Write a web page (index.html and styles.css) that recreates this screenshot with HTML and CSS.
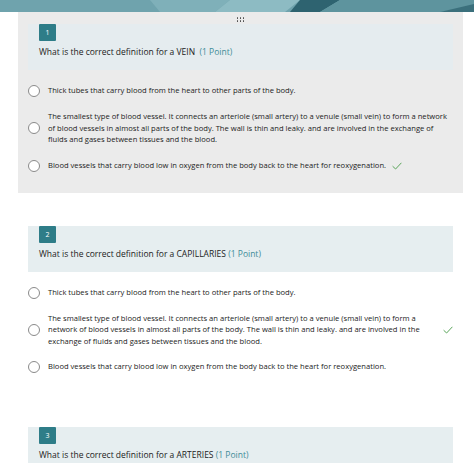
FILE: index.html
```html
<!DOCTYPE html>
<html>
<head>
<meta charset="utf-8">
<link rel="stylesheet" href="styles.css">
</head>
<body>
<div class="banner">
  <svg width="474" height="12" viewBox="0 0 474 12" preserveAspectRatio="none">
    <rect x="0" y="0" width="474" height="12" fill="#6fa3ad"/>
    <polygon points="150,0 230,0 215,12 160,12" fill="#7fb0b9"/>
    <polygon points="230,0 300,0 285,12 215,12" fill="#8dbbc3"/>
    <polygon points="300,0 340,0 320,12 290,12" fill="#2e6370"/>
    <polygon points="340,0 474,0 474,6 440,12 320,12" fill="#5e949e"/>
    <polygon points="474,4 474,12 440,12" fill="#3b707c"/>
  </svg>
</div>
<main class="page">
  <section class="card active">
    <div class="grip"><span class="dots"><i></i><i></i><i></i><i></i><i></i><i></i></span></div>
    <div class="qhead">
      <span class="badge">1</span>
      <div class="qtext">What is the correct definition for a VEIN <span class="pts">&nbsp;(1 Point)</span></div>
    </div>
    <ul class="opts">
      <li class="opt"><span class="radio"></span><span class="otext">Thick tubes that carry blood from the heart to other parts of the body.</span></li>
      <li class="opt"><span class="radio"></span><span class="otext">The smallest type of blood vessel. It connects an arteriole (small artery) to a venule (small vein) to form a network of blood vessels in almost all parts of the body. The wall is thin and leaky. and are involved in the exchange of fluids and gases between tissues and the blood.</span></li>
      <li class="opt"><span class="radio"></span><span class="otext">Blood vessels that carry blood low in oxygen from the body back to the heart for reoxygenation.</span><svg class="check" width="10" height="8" viewBox="0 0 10 8"><path d="M0.6 4.2 L3.6 7 L9.4 0.8" fill="none" stroke="#5aa55a" stroke-width="1"/></svg></li>
    </ul>
  </section>
  <section class="card">
    <div class="grip"></div>
    <div class="qhead">
      <span class="badge">2</span>
      <div class="qtext">What is the correct definition for a CAPILLARIES <span class="pts">(1 Point)</span></div>
    </div>
    <ul class="opts">
      <li class="opt"><span class="radio"></span><span class="otext">Thick tubes that carry blood from the heart to other parts of the body.</span></li>
      <li class="opt"><span class="radio"></span><span class="otext">The smallest type of blood vessel. It connects an arteriole (small artery) to a venule (small vein) to form a network of blood vessels in almost all parts of the body. The wall is thin and leaky. and are involved in the exchange of fluids and gases between tissues and the blood.</span><svg class="check" width="10" height="8" viewBox="0 0 10 8"><path d="M0.6 4.2 L3.6 7 L9.4 0.8" fill="none" stroke="#5aa55a" stroke-width="1"/></svg></li>
      <li class="opt"><span class="radio"></span><span class="otext">Blood vessels that carry blood low in oxygen from the body back to the heart for reoxygenation.</span></li>
    </ul>
  </section>
  <section class="card">
    <div class="grip"></div>
    <div class="qhead">
      <span class="badge">3</span>
      <div class="qtext">What is the correct definition for a ARTERIES <span class="pts">(1 Point)</span></div>
    </div>
  </section>
</main>
</body>
</html>
```
FILE: styles.css
```css
html, body {
  margin: 0;
  padding: 0;
  background: #ffffff;
  overflow: hidden;
}
body {
  font-family: "Open Sans", "Noto Sans", "Liberation Sans", sans-serif;
  color: #262626;
  width: 474px;
  height: 463px;
}
.banner {
  height: 12px;
  line-height: 0;
}
.banner svg {
  display: block;
}
.page {
  padding: 0 11px 0 18px;
}
.card {
  padding: 0 10px;
  margin-bottom: 21px;
  background: #ffffff;
}
.card.active {
  background: #ebebeb;
}
.grip {
  height: 12px;
  display: flex;
  justify-content: center;
  align-items: center;
}
.dots {
  display: grid;
  grid-template-columns: repeat(3, 2px);
  grid-auto-rows: 2px;
  gap: 1px 1px;
  margin-top: 3px;
}
.dots i {
  display: block;
  width: 1.6px;
  height: 1.6px;
  border-radius: 50%;
  background: #4a4a4a;
}
.qhead {
  background: #e6eef0;
  padding: 0 11px 10px;
  height: 36px;
}
.card.active .qhead {
  background: #e5ecef;
}
.badge {
  display: flex;
  width: 17px;
  height: 17px;
  background: #2e7d88;
  color: #ffffff;
  font-size: 7px;
  align-items: center;
  justify-content: center;
  border-radius: 1px;
}
.qtext {
  margin-top: 3px;
  line-height: 16px;
  font-size: 8.5px;
  color: #222222;
  white-space: nowrap;
}
.pts {
  color: #3f8c98;
}
.opts {
  list-style: none;
  margin: 0;
  padding: 8px 0 14px;
}
.opt {
  display: flex;
  align-items: center;
  padding: 7px 0;
}
.radio {
  flex: none;
  width: 10px;
  height: 10px;
  border: 1px solid #8a8a8a;
  border-radius: 50%;
  background: #ffffff;
  margin-right: 8px;
}
.otext {
  font-size: 7.6px;
  line-height: 11.5px;
  color: #222222;
}
.check {
  flex: none;
  margin-left: 6px;
}
```
